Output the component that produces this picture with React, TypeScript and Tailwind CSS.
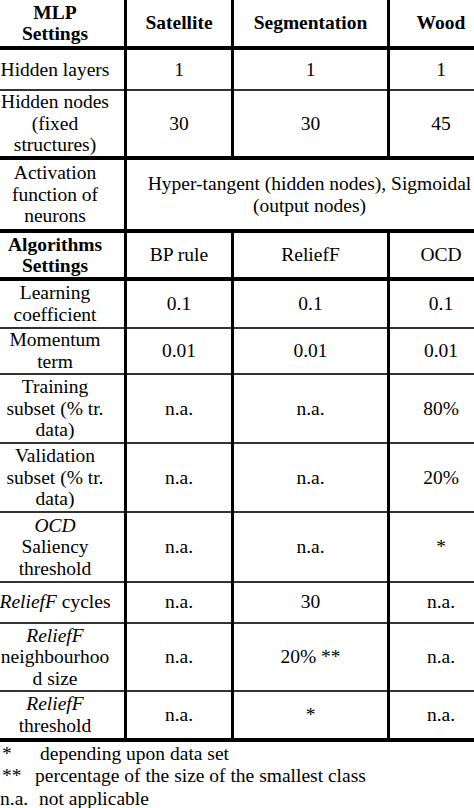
import React from 'react'

type Row = {
  label: React.ReactNode
  cells: React.ReactNode[]
  h: string
  thick?: boolean
  bold?: boolean
  span?: boolean
}

const I = ({ children }: { children: React.ReactNode }) => <i>{children}</i>

const rows: Row[] = [
  { label: <>MLP<br />Settings</>, cells: ['Satellite', 'Segmentation', 'Wood'], h: 'h-[48px]', thick: true, bold: true },
  { label: 'Hidden layers', cells: ['1', '1', '1'], h: 'h-[41.5px]' },
  { label: <>Hidden nodes<br />(fixed<br />structures)</>, cells: ['30', '30', '45'], h: 'h-[68.5px]', thick: true },
  {
    label: <>Activation<br />function of<br />neurons</>,
    cells: [<>Hyper-tangent (hidden nodes), Sigmoidal<br />(output nodes)</>],
    h: 'h-[73px]',
    thick: true,
    span: true,
  },
  { label: <b>Algorithms<br />Settings</b>, cells: ['BP rule', 'ReliefF', 'OCD'], h: 'h-[48px]', thick: true },
  { label: <>Learning<br />coefficient</>, cells: ['0.1', '0.1', '0.1'], h: 'h-[48.5px]' },
  { label: <>Momentum<br />term</>, cells: ['0.01', '0.01', '0.01'], h: 'h-[46.5px]' },
  { label: <>Training<br />subset (% tr.<br />data)</>, cells: ['n.a.', 'n.a.', '80%'], h: 'h-[69px]' },
  { label: <>Validation<br />subset (% tr.<br />data)</>, cells: ['n.a.', 'n.a.', '20%'], h: 'h-[69px]' },
  { label: <><I>OCD</I><br />Saliency<br />threshold</>, cells: ['n.a.', 'n.a.', '*'], h: 'h-[69.5px]' },
  { label: <><I>ReliefF</I> cycles</>, cells: ['n.a.', '30', 'n.a.'], h: 'h-[41px]' },
  { label: <><I>ReliefF</I><br />neighbourhoo<br />d size</>, cells: ['n.a.', '20% **', 'n.a.'], h: 'h-[68.5px]' },
  { label: <><I>ReliefF</I><br />threshold</>, cells: ['n.a.', '*', 'n.a.'], h: 'h-[48.5px]', thick: true },
]

export default function App() {
  return (
    <div className="w-[474px] h-[808px] overflow-hidden bg-white text-black font-['Liberation_Serif',serif] text-[19.5px] leading-[22.5px]">
      <table className="-ml-[14px] w-[506px] table-fixed border-collapse leading-[21.5px]">
        <colgroup>
          <col className="w-[139.5px]" />
          <col className="w-[107px]" />
          <col className="w-[156px]" />
          <col className="w-[103.5px]" />
        </colgroup>
        <tbody>
          {rows.map((r, i) => {
            const b = r.thick ? 'border-b-4 border-b-black' : 'border-b-2 border-b-[#333]'
            return (
              <tr key={i} className={r.h}>
                <td className={`${b} border-r-[3px] border-r-black p-0 text-center ${r.bold ? 'font-bold' : ''}`}>
                  {r.label}
                </td>
                {r.span ? (
                  <td colSpan={3} className={`${b} p-0 text-center`}>
                    {r.cells[0]}
                  </td>
                ) : (
                  r.cells.map((c, j) => (
                    <td
                      key={j}
                      className={`${b} ${j < 2 ? 'border-r-[3px] border-r-black' : ''} p-0 text-center ${r.bold ? 'font-bold' : ''}`}
                    >
                      {c}
                    </td>
                  ))
                )}
              </tr>
            )
          })}
        </tbody>
      </table>

      <div className="mt-[1px] pl-[2px]">
        <div className="flex">
          <span className="w-[38px]">*</span>
          <span>depending upon data set</span>
        </div>
        <div className="flex">
          <span className="w-[33px]">**</span>
          <span>percentage of the size of the smallest class</span>
        </div>
        <div className="flex -ml-[2px]">
          <span className="w-[39px]">n.a.</span>
          <span>not applicable</span>
        </div>
      </div>
    </div>
  )
}
